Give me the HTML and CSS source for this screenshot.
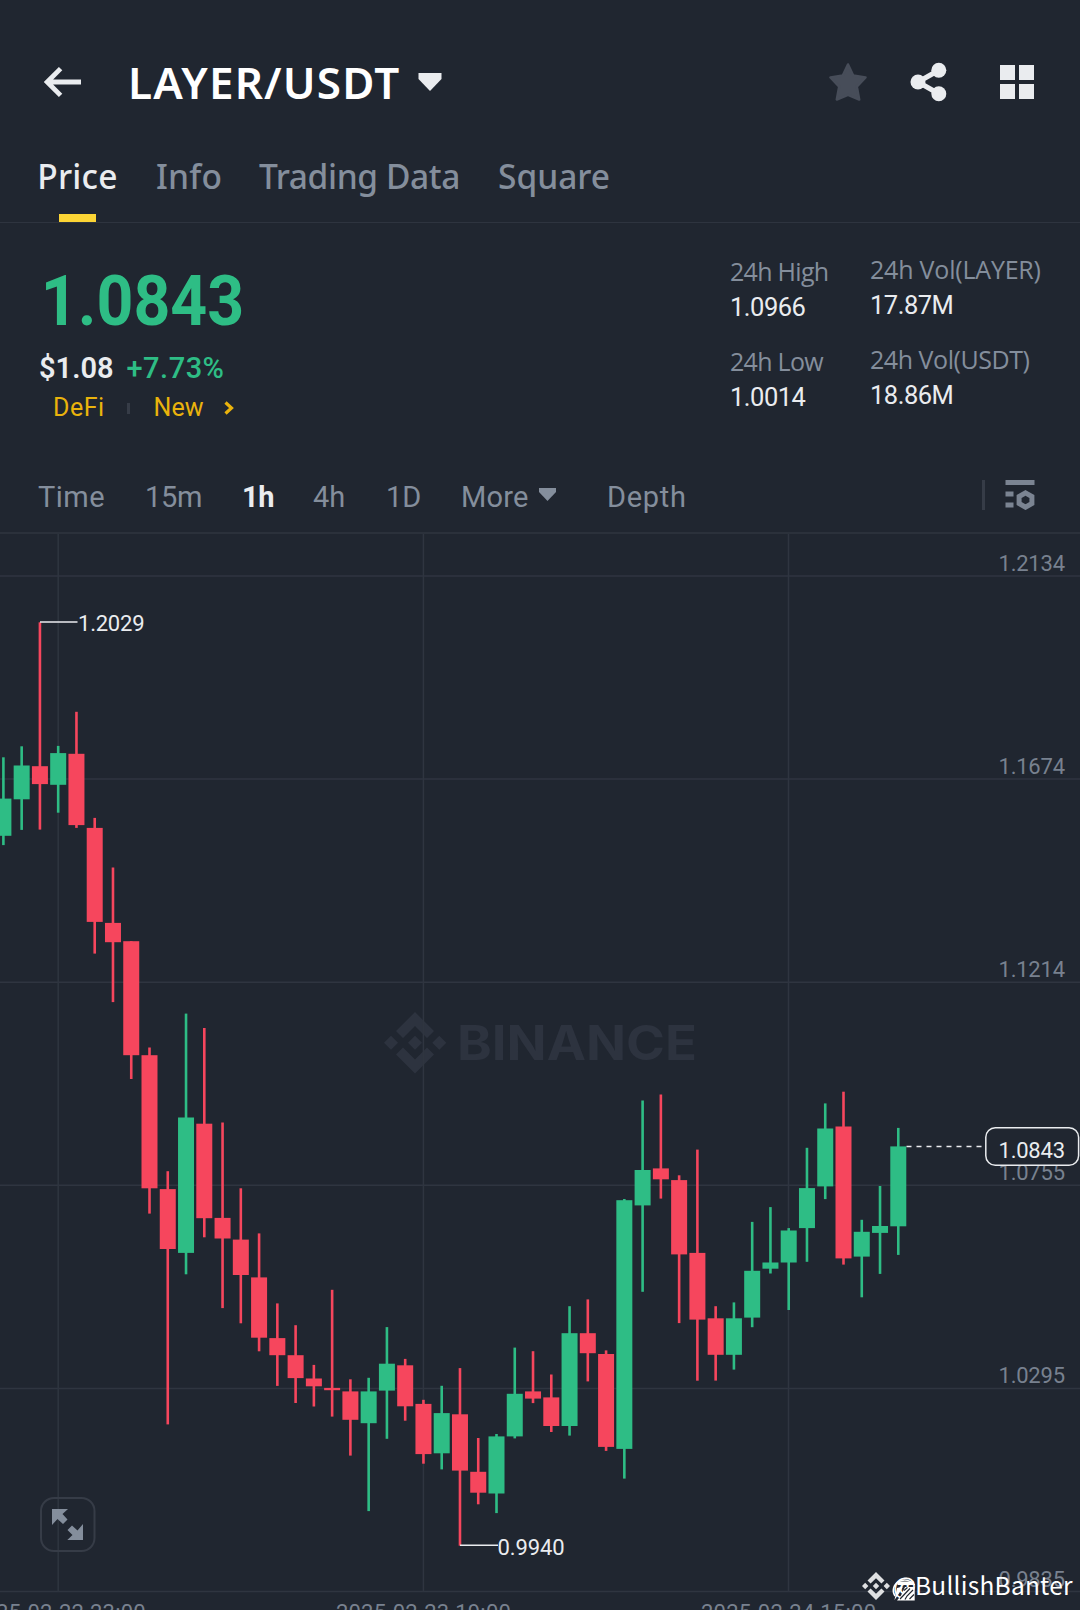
FILE: index.html
```html
<!DOCTYPE html>
<html lang="en">
<head>
<meta charset="utf-8">
<title>LAYER/USDT</title>
<link rel="stylesheet" href="styles.css">
</head>
<body>
<div class="app">
  <header class="topbar">
    <svg class="back" viewBox="0 0 38 32" width="38" height="32"><path d="M16.6 2.6 3.2 16l13.4 13.4M3.6 16H37" fill="none" stroke="#eaecef" stroke-width="4.8"/></svg>
    <h1 class="pair">LAYER/USDT</h1>
    <svg class="caret" viewBox="0 0 24 18" width="24" height="18"><path d="M.5 0H23.500V6L12 18 .5 6Z" fill="#eaecef"/></svg>
    <div class="actions">
      <svg viewBox="0 0 38 40" width="38" height="40"><path d="M19 2.500 24.200 13.500 36.500 15.500 27.800 24.600 30.200 37.500 19 32.800 7.800 37.500 10.200 24.600 1.500 15.500 13.800 13.500Z" fill="#474d59" stroke="#474d59" stroke-width="2.500" stroke-linejoin="round"/></svg>
      <svg viewBox="0 0 37 40" width="37" height="40"><g fill="#eaecef"><circle cx="8" cy="20" r="7.500"/><circle cx="28.800" cy="8.300" r="7.500"/><circle cx="28.800" cy="31.700" r="7.500"/></g><path d="M28.800 8.300 8 20l20.800 11.700" fill="none" stroke="#eaecef" stroke-width="5"/></svg>
      <svg viewBox="0 0 34 36" width="34" height="36"><path d="M0 1h15v15H0zM19 1h15v15H19zM0 20h15v15H0zM19 20h15v15H19z" fill="#eaecef"/></svg>
    </div>
  </header>

  <nav class="tabs">
    <a class="tab tab-active t-price">Price</a>
    <a class="tab t-info">Info</a>
    <a class="tab t-data">Trading Data</a>
    <a class="tab t-square">Square</a>
  </nav>

  <section class="summary">
    <div class="quote">
      <div class="last">1.0843</div>
      <div class="change"><span class="fiat">$1.08</span><span class="pct">+7.73%</span></div>
      <div class="tags">
        <span class="defi">DeFi</span><i class="tag-sep"></i><span class="new">New</span>
        <svg viewBox="0 0 10 14" width="10" height="14"><path d="M1.500 1.500 7.500 7l-6 5.500" fill="none" stroke="#eab30c" stroke-width="3.200"/></svg>
      </div>
    </div>
    <div class="stats">
      <dl class="stat-col low-high">
        <dt class="k-high">24h High</dt><dd>1.0966</dd>
        <dt class="k-low">24h Low</dt><dd>1.0014</dd>
      </dl>
      <dl class="stat-col volume">
        <dt class="k-vl">24h Vol(LAYER)</dt><dd>17.87M</dd>
        <dt class="k-vu">24h Vol(USDT)</dt><dd>18.86M</dd>
      </dl>
    </div>
  </section>

  <div class="intervals">
    <span class="iv-time">Time</span>
    <span class="iv-15">15m</span>
    <span class="iv-1h active">1h</span>
    <span class="iv-4h">4h</span>
    <span class="iv-1d">1D</span>
    <span class="iv-more">More</span>
    <svg class="more-caret" viewBox="0 0 17 13" width="17" height="13"><path d="M0 0H17V4L8.500 13 0 4Z" fill="#848e9c"/></svg>
    <span class="iv-depth">Depth</span>
    <i class="iv-sep"></i>
    <svg class="settings" viewBox="0 0 30 30" width="30" height="30"><path d="M.5 0h29v5H.5zM.5 11.500h8v5h-8zM.5 22.500h8v5h-8z" fill="#7b8492"/><path d="M20.500 12.800 26.900 16.500v7L20.500 27.200 14.100 23.500v-7Z" fill="none" stroke="#7b8492" stroke-width="5"/></svg>
  </div>

  <main class="chart">
    <svg id="chart" class="chart-svg" viewBox="0 534 1080 1076" width="1080" height="1076">
      <g class="watermark">
        <path d="M415 1012 434 1031 427 1038 415 1026 403 1038 396 1031Z M415 1073.600 434 1054.600 427 1047.600 415 1059.600 403 1047.600 396 1054.600Z M391 1035.800 398 1042.800 391 1049.800 384 1042.800Z M439.300 1035.800 446.300 1042.800 439.300 1049.800 432.300 1042.800Z M415 1035.800 422 1042.800 415 1049.800 408 1042.800Z"/>
        <text x="457" y="1059.800" textLength="240" lengthAdjust="spacingAndGlyphs">BINANCE</text>
      </g>
      <g id="grid" class="grid"></g>
      <g id="candles"></g>
      <g id="labels"></g>
      <path class="leader" d="M40 622H77.500M460 1545.300H498"/>
      <text class="mark" x="78" y="630.500" textLength="66.500">1.2029</text>
      <text class="mark" x="497.500" y="1554.500" textLength="67">0.9940</text>
      <path class="last-line" d="M906.500 1146.500H983"/>
      <rect class="last-box" x="985.800" y="1127.700" width="92.800" height="37.600" rx="9.500"/>
      <text class="mark" x="998.500" y="1157.500" textLength="66.500">1.0843</text>
      <g class="expand">
        <rect x="41" y="1498" width="53.500" height="53" rx="13"/>
        <path d="M52 1509H68L62.500 1514 67.500 1519.500 63 1524 57.500 1519 52 1525ZM83 1540H67.300L72.500 1535 67.500 1530 72 1525.500 77.500 1530.500 83 1524Z"/>
      </g>
      <g class="credit">
        <path class="credit-logo" d="M876 1572 884.500 1580.500 881.400 1583.600 876 1578.300 870.600 1583.600 867.500 1580.500Z M876 1600 884.500 1591.500 881.400 1588.400 876 1593.700 870.600 1588.400 867.500 1591.500Z M865.200 1582.800 868.400 1586 865.200 1589.200 862 1586Z M886.800 1582.800 890 1586 886.800 1589.200 883.600 1586Z M876 1582.800 879.200 1586 876 1589.200 872.800 1586Z"/>
        <text x="893" y="1595">@</text>
        <path class="avatar-line" d="M895 1596A10.500 9.500 0 1 1 914.500 1585"/>
        <path d="M897.500 1581.500H914V1585H897.500ZM897 1588 903 1586.500 899 1593.500 894.500 1600ZM905 1587H914.700V1600.500H897L901 1595.500Z"/>
        <path class="avatar-cut" d="M900 1599 910 1588.500M905 1599.500 907 1596 913 1590M904 1590.500 907.500 1587.500M909.500 1599 914 1594.500"/>
        <text x="915" y="1595" textLength="157.500">BullishBanter</text>
      </g>
    </svg>
  </main>
</div>
<script src="chart.js"></script>
</body>
</html>
```
FILE: styles.css
```css
* { box-sizing: border-box; }
body { margin: 0; background: #202630; color: #eaecef; font-family: Roboto, "Liberation Sans", sans-serif; }
.app { width: 1080px; height: 1610px; overflow: hidden; display: flex; flex-direction: column; }
svg { display: block; flex: none; }
span, a, h1 { white-space: nowrap; }

.topbar { height: 142px; padding: 22px 46px 0 44px; display: flex; align-items: center; }
.pair { margin: 0 0 0 46px; width: 273px; font: 600 44px/60px "Noto Sans", sans-serif; letter-spacing: 1.15px; color: #fff; }
.caret { margin-left: 17px; }
.actions { margin-left: auto; display: flex; align-items: center; }
.actions svg:nth-child(2) { margin-left: 43px; }
.actions svg:nth-child(3) { margin-left: 53px; }

.tabs { height: 81px; padding: 13px 0 0 39px; display: flex; border-bottom: 1px solid #2e343f; }
.tab { font: 500 33.500px/42px "Noto Sans", sans-serif; color: #848e9c; height: 67px; }
.tab-active { color: #eaecef; display: flex; flex-direction: column; align-items: center; }
.tab-active::after { content: ""; width: 37px; height: 8px; margin-top: 17px; background: #fcd535; }
.t-price { width: 117px; padding-right: 40px; letter-spacing: .2px; }
.t-info { width: 103px; letter-spacing: .2px; }
.t-data { width: 239px; letter-spacing: -.4px; }

.summary { height: 237px; display: flex; justify-content: space-between; padding: 0 39px 0 39px; }
.quote { padding-top: 37px; }
.last { font-size: 70px; line-height: 82px; font-weight: 700; color: #2ebd85; padding-left: 2px; transform: scaleX(.92); transform-origin: 0 50%; }
.change { display: flex; gap: 13px; font-size: 29px; line-height: 40px; font-weight: 600; margin-top: 6px; }
.pct { color: #2ebd85; font-weight: 500; letter-spacing: .5px; }
.tags { display: flex; align-items: center; font-size: 25px; line-height: 36px; color: #eab30c; padding-left: 14px; margin-top: 2px; }
.defi { letter-spacing: .5px; }
.tag-sep { width: 3px; height: 11px; background: #363c47; margin: 0 24px 0 22px; }
.tags svg { margin-left: 21px; }
.stats { display: flex; width: 311px; }
.stat-col { margin: 0; padding-top: 30px; }
.low-high { width: 140px; padding-top: 32px; }
dt { font: 400 25px/32px "Open Sans", sans-serif; color: #848e9c; white-space: nowrap; height: 34px; }
.k-high, .k-low { letter-spacing: -.7px; }
.k-vl { letter-spacing: -.2px; }
.k-vu { letter-spacing: -.45px; }
dd { margin: 0 0 19px; font-size: 25.500px; line-height: 37px; height: 37px; letter-spacing: -.5px; }

.intervals { height: 72px; display: flex; align-items: center; padding: 1px 45px 0 38px; font-size: 29px; line-height: 40px; color: #848e9c; }
.iv-time { width: 107px; letter-spacing: .5px; }
.iv-15 { width: 97px; letter-spacing: -.3px; }
.iv-1h { width: 71px; letter-spacing: -.5px; }
.iv-4h { width: 73px; }
.iv-1d { width: 75px; }
.iv-more { width: 78px; letter-spacing: .2px; }
.more-caret { margin: 0 51px 4px 0; }
.iv-depth { letter-spacing: .7px; }
.active { color: #eaecef; font-weight: 700; }
.iv-sep { width: 3px; height: 30px; background: #363c47; margin: 0 20px 3px auto; }
.settings { margin-bottom: 3px; }

.chart { height: 1078px; border-top: 2px solid #2b313b; }
.grid { stroke: #2f3540; stroke-width: 1.500; }
.watermark { fill: #2d333f; font: 700 47.500px Inter, sans-serif; }
.axis { fill: #78818f; font-size: 22px; }
.mark { fill: #eaecef; font-size: 22px; }
.leader { stroke: #eaecef; stroke-width: 1.500; }
.last-line { stroke: #eaecef; stroke-width: 1.500; stroke-dasharray: 5 5; }
.last-box { fill: #202630; stroke: #eaecef; stroke-width: 1.500; }
.up { fill: #2ebd85; }
.down { fill: #f6465d; }
.expand rect { fill: none; stroke: #363c47; stroke-width: 2; }
.expand path { fill: #848e9c; }
.credit { fill: #fff; font: 400 24.500px "Noto Sans CJK SC", "Noto Sans", sans-serif; }
.credit-logo { fill: #dfe0e2; }
.avatar-line { fill: none; stroke: #fff; stroke-width: 1.500; }
.avatar-cut { fill: none; stroke: #202630; stroke-width: 1.200; }
```
FILE: chart.js
```js
// [high, low, bodyTop, bodyBottom, direction] in chart pixels, one entry per hour
const candles = [
  [757.3,845.1,798.6,835.8,1],[746.3,829.9,765.5,799.3,1],[622.3,829.6,766.2,784.1,0],[745.9,812.7,753.1,784.8,1],
  [711.8,827.9,753.8,825.1,0],[817.9,953.6,827.9,921.9,0],[867.5,1002.1,922.9,942.2,0],[941.2,1079,941.2,1055.2,0],
  [1047.5,1213.6,1055.2,1188.3,0],[1171.2,1424.4,1189.1,1249,0],[1013.6,1274.3,1117.5,1252.9,1],[1028,1237.3,1123.7,1218.2,0],
  [1122.5,1308.1,1217.9,1238.5,0],[1188.3,1323.3,1239.6,1275,0],[1233.4,1351.3,1277.4,1337.7,0],[1303.4,1385.9,1338.1,1355.2,0],
  [1325.2,1403,1355.2,1378.1,0],[1364.9,1406.5,1378.5,1386.3,0],[1289.8,1416.6,1387.9,1390.2,0],[1379.3,1455.6,1391.4,1419.8,0],
  [1377.8,1511.1,1391.4,1423.2,1],[1327.1,1438.8,1363.7,1390.6,1],[1358.9,1420.7,1365.3,1406.3,0],[1399.8,1463.7,1403.9,1454.1,0],
  [1385.8,1469.4,1413.1,1453.3,1],[1368.1,1545.7,1414.3,1470.6,0],[1438,1504.3,1471.8,1492.7,0],[1434,1513.1,1436.4,1493.5,1],
  [1347.6,1438.4,1393.8,1436.4,1],[1351.2,1403.1,1391.4,1398.6,0],[1374.5,1432,1397.4,1426,0],[1306.2,1435.6,1333.2,1426,1],
  [1299.4,1381.4,1333.2,1353.2,0],[1350.4,1450.9,1354,1446.9,0],[1199,1478.6,1200.2,1448.9,1],[1100.5,1291.8,1170,1205.4,1],
  [1094.5,1198.6,1168.4,1179.3,0],[1175.3,1323.1,1180.1,1254.4,0],[1149.6,1380.7,1252.9,1319.6,0],[1306.2,1380.6,1318.3,1354.8,0],
  [1302.4,1369.6,1318.3,1354.8,1],[1221.9,1327.2,1270.8,1317.6,1],[1207.1,1273.5,1262.5,1268.7,1],[1228.1,1310,1230.5,1262.5,1],
  [1147.8,1261.8,1188.1,1228.1,1],[1103.4,1199.1,1128.5,1186.4,1],[1091.7,1264.6,1126.5,1258.4,0],[1219.8,1297.3,1231.8,1256.6,1],
  [1186,1273.9,1226,1232.9,1],[1127.9,1254.9,1146.4,1226.3,1]
];
const NS = "http://www.w3.org/2000/svg";
function add(parent, name, attrs, text) {
  const el = document.createElementNS(NS, name);
  for (const k in attrs) el.setAttribute(k, attrs[k]);
  if (text) el.textContent = text;
  document.getElementById(parent).appendChild(el);
}
const prices = ["1.2134", "1.1674", "1.1214", "1.0755", "1.0295", "0.9835"];
prices.forEach((p, i) => {
  const y = 576 + i * 203.1;
  add("grid", "line", { x1: 0, x2: 1080, y1: y, y2: y });
  add("labels", "text", { class: "axis", x: 998.5, y: y - 5, textLength: 66.5 }, p);
});
[[58.2, "2025-02-22 23:00"], [423.4, "2025-02-23 19:00"], [788.5, "2025-02-24 15:00"]].forEach(([x, t]) => {
  add("grid", "line", { x1: x, x2: x, y1: 534, y2: 1591.5 });
  add("labels", "text", { class: "axis", x: x - 87.5, y: 1620, textLength: 175 }, t);
});
candles.forEach(([high, low, top, bottom, up], i) => {
  const x = 3.4 + i * 18.263;
  const cls = up ? "up" : "down";
  add("candles", "rect", { class: cls, x: x - 1.3, y: high, width: 2.6, height: low - high });
  add("candles", "rect", { class: cls, x: x - 8, y: top, width: 16, height: bottom - top });
});
```
